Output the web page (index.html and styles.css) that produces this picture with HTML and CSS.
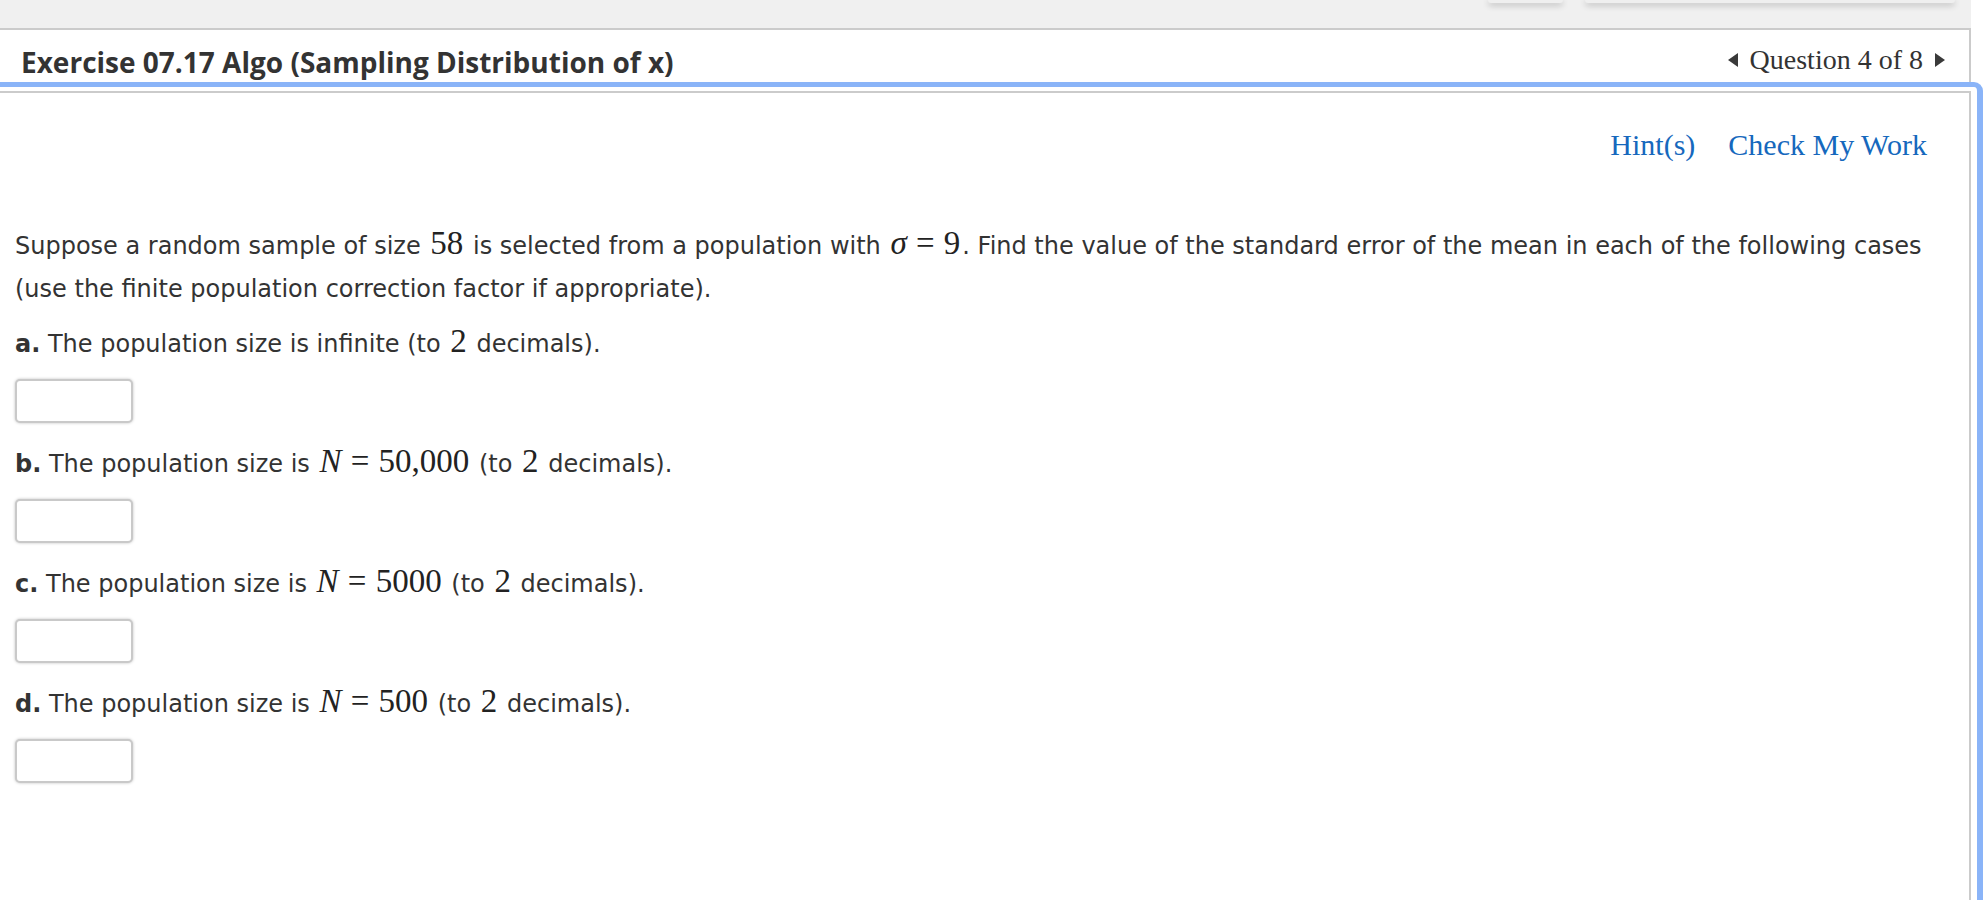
FILE: index.html
```html
<!DOCTYPE html>
<html lang="en">
<head>
<meta charset="utf-8">
<title>Exercise 07.17 Algo</title>
<link rel="stylesheet" href="styles.css">
</head>
<body>
<div class="top-band">
  <div class="tb-btn tb-btn-sm"></div>
  <div class="tb-btn tb-btn-lg"></div>
</div>
<header class="panel-head">
  <h1 class="title">Exercise 07.17 Algo (Sampling Distribution of x)</h1>
  <nav class="qnav">
    <span class="arrow arrow-left"></span>
    <span class="qlabel">Question 4 of 8</span>
    <span class="arrow arrow-right"></span>
  </nav>
</header>
<main class="focus">
  <div class="content">
    <div class="tools">
      <a class="tool-link">Hint(s)</a>
      <a class="tool-link">Check My Work</a>
    </div>
    <p class="stem">Suppose a random sample of size <span class="m">58</span> is selected from a population with <span class="m"><i>σ</i><span class="rel">=</span>9</span>. Find the value of the standard error of the mean in each of the following cases (use the finite population correction factor if appropriate).</p>
    <div class="part">
      <p class="part-text"><b>a.</b> The population size is infinite (to <span class="m">2</span> decimals).</p>
      <input class="answer" type="text">
    </div>
    <div class="part">
      <p class="part-text"><b>b.</b> The population size is <span class="m"><i>N</i><span class="rel">=</span>50,000</span> (to <span class="m">2</span> decimals).</p>
      <input class="answer" type="text">
    </div>
    <div class="part">
      <p class="part-text"><b>c.</b> The population size is <span class="m"><i>N</i><span class="rel">=</span>5000</span> (to <span class="m">2</span> decimals).</p>
      <input class="answer" type="text">
    </div>
    <div class="part">
      <p class="part-text"><b>d.</b> The population size is <span class="m"><i>N</i><span class="rel">=</span>500</span> (to <span class="m">2</span> decimals).</p>
      <input class="answer" type="text">
    </div>
  </div>
</main>
</body>
</html>
```
FILE: styles.css
```css
html, body {
  margin: 0;
  padding: 0;
  background: #ffffff;
}
body {
  font-family: "DejaVu Sans", Verdana, sans-serif;
  color: #333333;
  width: 1986px;
  height: 900px;
  overflow: hidden;
}

/* top gray band with the bottoms of toolbar buttons */
.top-band {
  width: 1971px;
  height: 28px;
  box-sizing: border-box;
  background: #f0f0f0;
  display: flex;
  justify-content: flex-end;
  align-items: flex-start;
  gap: 22px;
  padding-right: 16px;
}
.tb-btn {
  height: 3px;
  background: #efefef;
  border-radius: 0 0 7px 7px;
  box-shadow: 0 2px 6px rgba(0, 0, 0, 0.3);
}
.tb-btn-sm { width: 75px; }
.tb-btn-lg { width: 370px; }

/* header */
.panel-head {
  width: 1971px;
  height: 54px;
  box-sizing: border-box;
  border-top: 2px solid #cbcbcb;
  border-right: 2px solid #cbcbcb;
  display: flex;
  justify-content: space-between;
  align-items: flex-end;
  padding: 0 24px 0 21px;
}
.title {
  margin: 0 0 4px 0;
  font-family: "Open Sans", sans-serif;
  font-weight: 700;
  font-size: 28px;
  line-height: 32px;
  color: #333333;
}
.qnav {
  display: flex;
  align-items: center;
  gap: 12px;
  margin-bottom: 6px;
  font-family: "Liberation Serif", "Times New Roman", serif;
  font-size: 28px;
  line-height: 32px;
  color: #333333;
}
.arrow {
  width: 0;
  height: 0;
  border-top: 7px solid transparent;
  border-bottom: 7px solid transparent;
}
.arrow-left { border-right: 10px solid #3a3a3a; }
.arrow-right { border-left: 10px solid #3a3a3a; }

/* focused content area */
.focus {
  width: 1983px;
  height: 818px;
  box-sizing: border-box;
  border-top: 5px solid #8ab4f8;
  border-right: 6px solid #8ab4f8;
  border-top-right-radius: 9px;
  padding-top: 4px;
}
.content {
  width: 1971px;
  height: 100%;
  box-sizing: border-box;
  border-top: 2px solid #cbcbcb;
  border-right: 2px solid #cbcbcb;
  padding: 0 20px 0 15px;
}

.tools {
  display: flex;
  justify-content: flex-end;
  gap: 33px;
  margin-top: 34px;
  padding-right: 22px;
  font-family: "Liberation Serif", Georgia, serif;
  font-size: 30px;
  line-height: 36px;
}
.tool-link {
  color: #1668bd;
  text-decoration: none;
  cursor: pointer;
}

.stem {
  margin: 62px 0 12px 0;
  font-size: 24px;
  line-height: 43px;
}
.m {
  font-family: "Liberation Serif", "Times New Roman", serif;
  font-size: 33px;
  line-height: 1;
  color: #222222;
  margin: 0 2px;
}
.m i { font-style: italic; }
.rel { margin: 0 0.28em; }

.part {
  display: flex;
  flex-direction: column;
  align-items: flex-start;
  gap: 13px;
  margin-bottom: 20px;
}
.part-text {
  margin: 0;
  font-size: 24px;
  line-height: 43px;
}
.part-text b { font-weight: 700; }

.answer {
  width: 118px;
  height: 44px;
  box-sizing: border-box;
  margin: 0;
  border: 2px solid #c9c9c9;
  border-radius: 5px;
  background: #ffffff;
  box-shadow: 0 0 3px rgba(0, 0, 0, 0.25);
  font-size: 20px;
}
```
